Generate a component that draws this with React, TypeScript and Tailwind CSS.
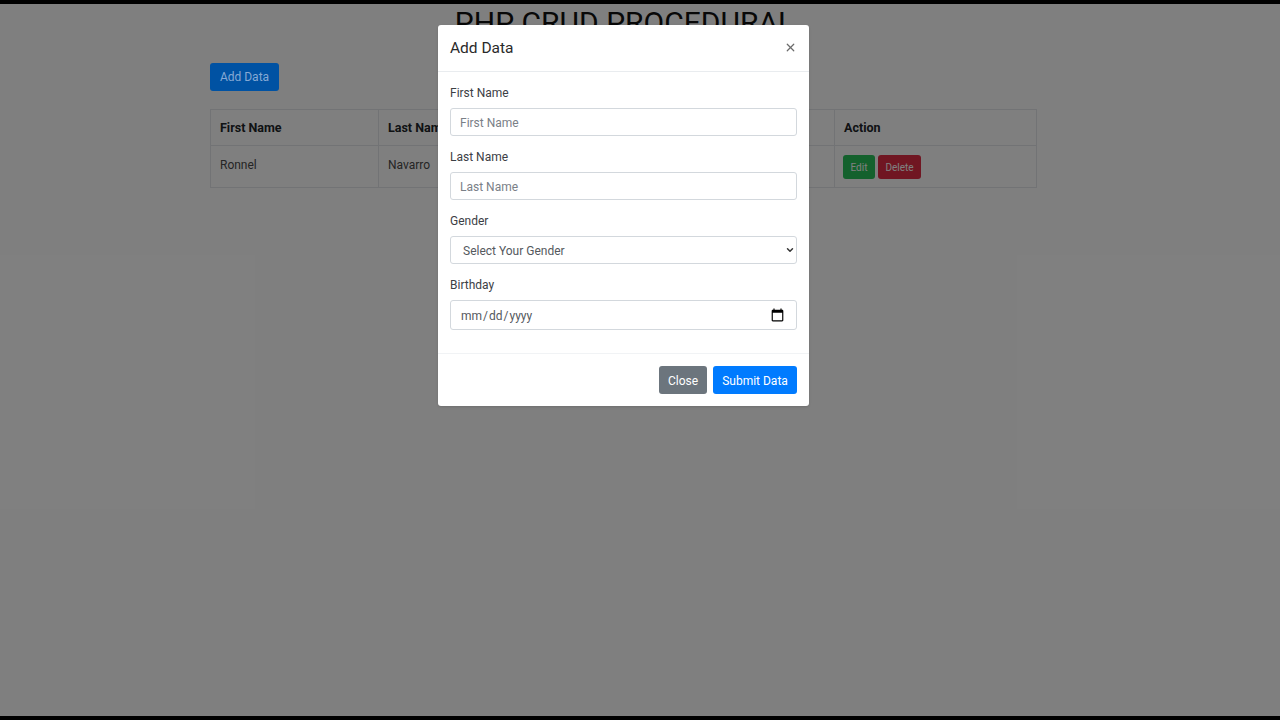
import React from 'react';
import { X, ChevronDown } from 'lucide-react';

const fieldClass =
  'block w-full h-[28px] rounded-[3px] border border-[#d3d8dd] bg-white px-[9px] pt-[1px] text-[12px] text-[#55595e] placeholder:text-[#7a8087] outline-none';

const Field: React.FC<{ label: string; children: React.ReactNode }> = ({ label, children }) => (
  <div className="mb-[12px]">
    <label className="block h-[24px] text-[12px] leading-[18px] text-[#3c4045]">{label}</label>
    {children}
  </div>
);

const App: React.FC = () => {
  return (
    <div className="flex h-[720px] flex-col overflow-hidden bg-black font-['Roboto',sans-serif] text-[#212529]">
      <div className="h-[4px] shrink-0" />
      <div className="relative flex-1 overflow-hidden bg-white">
        <h1 className="mr-[31px] mt-[-6px] h-[65px] text-center text-[30px] leading-[50px] font-normal text-[#111]">PHP CRUD PROCEDURAL</h1>

        <div className="ml-[210px] w-[827px]">
          {/* this one keeps its brighter blue through the backdrop */}
          <button className="relative z-10 h-[28px] w-[69px] rounded-[3px] bg-[#0052a3] text-[12px] text-[#86a9d4]">Add Data</button>

          <table className="mt-[18px] w-full table-fixed border-collapse border border-[#e4e7ea] text-[12px]">
            <thead>
              <tr className="h-[36px] text-left text-[12.5px] font-bold">
                <th className="w-[168px] border border-[#e4e7ea] px-[9px] pt-[2px]">First Name</th>
                <th className="w-[170px] border border-[#e4e7ea] px-[9px] pt-[2px]">Last Name</th>
                <th className="w-[140px] border border-[#e4e7ea] px-[9px] pt-[2px]">Gender</th>
                <th className="w-[146px] border border-[#e4e7ea] px-[9px] pt-[2px]">Birthday</th>
                <th className="border border-[#e4e7ea] px-[9px] pt-[2px]">Action</th>
              </tr>
            </thead>
            <tbody>
              <tr className="h-[42px] text-[#4a4a4a]">
                <td className="border border-[#e4e7ea] px-[9px] pb-[4px]">Ronnel</td>
                <td className="border border-[#e4e7ea] px-[9px] pb-[4px]">Navarro</td>
                <td className="border border-[#e4e7ea] px-[9px] pb-[4px]">Male</td>
                <td className="border border-[#e4e7ea] px-[9px] pb-[4px]">1996-01-01</td>
                <td className="border border-[#e4e7ea] px-[8px]">
                  <div className="flex gap-[3px]">
                    <button className="h-[24px] w-[32px] rounded-[3px] bg-[#28c25a] pt-[1px] text-[10px] text-white">Edit</button>
                    <button className="h-[24px] w-[43px] rounded-[3px] bg-[#e02c44] pt-[1px] text-[10px] text-white">Delete</button>
                  </div>
                </td>
              </tr>
            </tbody>
          </table>
        </div>

        {/* backdrop and modal */}
        <div className="absolute inset-0 flex items-start bg-black/50 pl-[438px] pt-[21px]">
          <div className="w-[371px] rounded-[3px] bg-white shadow-sm">
            <div className="flex h-[47px] items-center justify-between border-b border-[#e9ecef] px-[12px]">
              <h5 className="pt-[1px] text-[15.5px] font-normal text-[#2a2a2a]">Add Data</h5>
              <X size={13} strokeWidth={2.2} className="mb-[1px] text-[#6b6b6b]" />
            </div>
            <div className="h-[281px] px-[12px] pt-[12px]">
              <Field label="First Name">
                <input className={fieldClass} placeholder="First Name" />
              </Field>
              <Field label="Last Name">
                <input className={fieldClass} placeholder="Last Name" />
              </Field>
              <Field label="Gender">
                <div className="relative">
                  <select className={`${fieldClass} appearance-none pl-[12px]`} defaultValue="">
                    <option value="">Select Your Gender</option>
                  </select>
                  <ChevronDown size={10} strokeWidth={3.5} className="pointer-events-none absolute right-[2px] top-[9px] text-[#333]" />
                </div>
              </Field>
              <Field label="Birthday">
                <input
                  type="date"
                  className={`${fieldClass} h-[30px] pr-[11px] [&::-webkit-calendar-picker-indicator]:h-[15px] [&::-webkit-calendar-picker-indicator]:w-[15px] [&::-webkit-calendar-picker-indicator]:p-0`}
                />
              </Field>
            </div>
            <div className="flex h-[53px] items-center justify-end gap-[6px] border-t border-[#f1f3f5] px-[12px]">
              <button className="h-[28px] w-[48px] rounded-[3px] bg-[#6c757d] pt-[1px] text-[12px] text-white">Close</button>
              <button className="h-[28px] w-[84px] rounded-[3px] bg-[#007bff] pt-[1px] text-[12px] text-white">Submit Data</button>
            </div>
          </div>
        </div>
      </div>
      <div className="h-[4px] shrink-0" />
    </div>
  );
};

export default App;
